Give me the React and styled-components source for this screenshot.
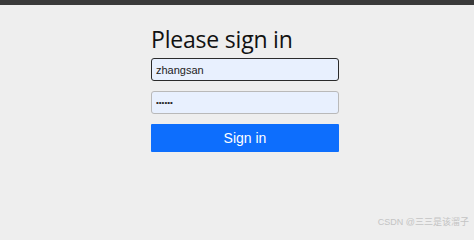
import React from "react";
import styled, { createGlobalStyle } from "styled-components";

const GlobalStyle = createGlobalStyle`
  html, body {
    margin: 0;
    padding: 0;
    background: #eeeeee;
  }
  body {
    font-family: "Liberation Sans", Arial, sans-serif;
  }
`;

const Page = styled.div`
  width: 474px;
  height: 235px;
  position: relative;
  overflow: hidden;
  background: #eeeeee;
`;

const TopBar = styled.div`
  height: 5px;
  background: #3a3a3a;
`;

const Form = styled.form`
  width: 188px;
  margin-left: 151px;
  padding-top: 18px;
  display: flex;
  flex-direction: column;
`;

const Heading = styled.h2`
  margin: 0 0 3px 0;
  font-family: "Open Sans", "Noto Sans", sans-serif;
  font-weight: 400;
  font-size: 23px;
  line-height: 32px;
  color: #111;
  letter-spacing: -0.2px;
`;

const Field = styled.input`
  box-sizing: border-box;
  width: 188px;
  height: 23px;
  margin-bottom: ${(p) => p.$gap || 0}px;
  padding: 0 4px;
  font-family: "Liberation Sans", Arial, sans-serif;
  font-size: ${(p) => (p.type === "password" ? 8 : 11)}px;
  color: #222;
  background: #e8f0fe;
  border: ${(p) => (p.$focused ? "1.5px solid #2b2b2b" : "1px solid #b9b9b9")};
  border-radius: 3px;
  outline: none;
`;

const SubmitButton = styled.button`
  box-sizing: border-box;
  width: 188px;
  height: 28px;
  border: none;
  border-radius: 1px;
  background: #0d6efd;
  color: #fff;
  font-family: "Liberation Sans", Arial, sans-serif;
  font-size: 14px;
  cursor: pointer;
`;

const Watermark = styled.div`
  position: absolute;
  right: 5px;
  bottom: 7px;
  font-family: "Liberation Sans", "Noto Sans CJK SC", sans-serif;
  font-size: 9px;
  color: #c4c4c4;
`;

export default function App() {
  return (
    <Page>
      <GlobalStyle />
      <TopBar />
      <Form onSubmit={(e) => e.preventDefault()}>
        <Heading>Please sign in</Heading>
        <Field $focused $gap={10} defaultValue="zhangsan" />
        <Field type="password" $gap={10} defaultValue="123456" />
        <SubmitButton type="submit">Sign in</SubmitButton>
      </Form>
      <Watermark>CSDN @三三是该溜子</Watermark>
    </Page>
  );
}
